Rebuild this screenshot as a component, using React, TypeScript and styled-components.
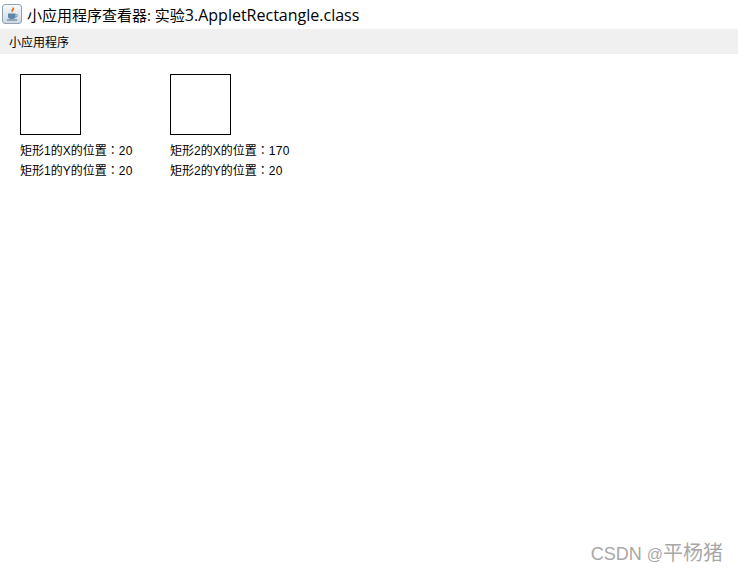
import React from 'react';
import styled, { createGlobalStyle } from 'styled-components';

const GlobalStyle = createGlobalStyle`
  html, body {
    margin: 0;
    padding: 0;
    background: #fff;
  }
`;

const CJK = `"Liberation Sans", "Noto Sans CJK SC", sans-serif`;

const Page = styled.div`
  position: relative;
  width: 738px;
  height: 574px;
  overflow: hidden;
  background: #fff;
  font-family: ${CJK};
  color: #000;
`;

const TitleBar = styled.div`
  display: flex;
  align-items: center;
  height: 29px;
  padding: 0 0 0 2px;
  box-sizing: border-box;
`;

const AppIcon = styled.div`
  display: flex;
  align-items: center;
  justify-content: center;
  width: 20px;
  height: 20px;
  box-sizing: border-box;
  border: 1px solid #8fa3b5;
  border-radius: 3px;
  background: linear-gradient(#f6f8fa, #cfdae4);
  margin: 0 5px 2px 0;
`;

const TitleText = styled.div`
  font-family: "Open Sans", "Noto Sans CJK SC", sans-serif;
  font-size: 15px;
  line-height: 20px;
  white-space: nowrap;
`;

const TitleLatin = styled.span`
  font-size: 16px;
`;

const MenuBar = styled.div`
  display: flex;
  align-items: center;
  height: 25px;
  padding-left: 9px;
  background: #f0f0f0;
  font-size: 12px;
`;

const Canvas = styled.div`
  display: flex;
  padding: 20px 0 0 20px;
`;

const Column = styled.div`
  width: 150px;
  display: flex;
  flex-direction: column;
`;

const Rect = styled.div`
  width: 61px;
  height: 61px;
  box-sizing: border-box;
  border: 1px solid #000;
  margin-bottom: 6px;
`;

const Label = styled.div`
  font-size: 12px;
  line-height: 20px;
  white-space: nowrap;
  font-family: "Liberation Sans", "Noto Sans CJK TC", sans-serif;
`;

const Value = styled.span`
  letter-spacing: 0.33px;
`;

const Watermark = styled.div`
  position: absolute;
  right: 15px;
  bottom: 7px;
  font-size: 18px;
  line-height: 24px;
  color: #a8a8a8;
  white-space: nowrap;
`;

const WatermarkAt = styled.span`
  font-size: 16px;
`;

const WatermarkName = styled.span`
  font-size: 20px;
`;

function JavaIcon() {
  return (
    <svg width="16" height="16" viewBox="0 0 16 16" fill="none">
      <path d="M8.500 1c1 1.500-2 2.500-1 4.500 .4.800 1 1 1 1-.3-1.500 2.500-2.500 1.500-4.500-.3-.5-.8-.8-1.500-1z" fill="#e2711d" />
      <path d="M4 7.500h7.500v3c0 1.500-1.200 2.500-2.500 2.500H6.500C5 13 4 12 4 10.500z" fill="#5f86a8" />
      <path d="M11.500 8.500h1c1.300 0 1.300 2.500-1.200 2.800" stroke="#5f86a8" strokeWidth="1" />
      <path d="M3 14h10" stroke="#4d7193" strokeWidth="1" />
    </svg>
  );
}

const rects = [
  { id: 1, x: 20, y: 20 },
  { id: 2, x: 170, y: 20 },
];

export default function App() {
  return (
    <Page>
      <GlobalStyle />
      <TitleBar>
        <AppIcon>
          <JavaIcon />
        </AppIcon>
        <TitleText>
          小应用程序查看器: 实验<TitleLatin>3.AppletRectangle.class</TitleLatin>
        </TitleText>
      </TitleBar>
      <MenuBar>小应用程序</MenuBar>
      <Canvas>
        {rects.map(({ id, x, y }) => (
          <Column key={id}>
            <Rect />
            <Label>
              {`矩形${id}的X的位置：`}
              <Value>{x}</Value>
            </Label>
            <Label>
              {`矩形${id}的Y的位置：`}
              <Value>{y}</Value>
            </Label>
          </Column>
        ))}
      </Canvas>
      <Watermark>
        CSDN <WatermarkAt>@</WatermarkAt>
        <WatermarkName>平杨猪</WatermarkName>
      </Watermark>
    </Page>
  );
}
